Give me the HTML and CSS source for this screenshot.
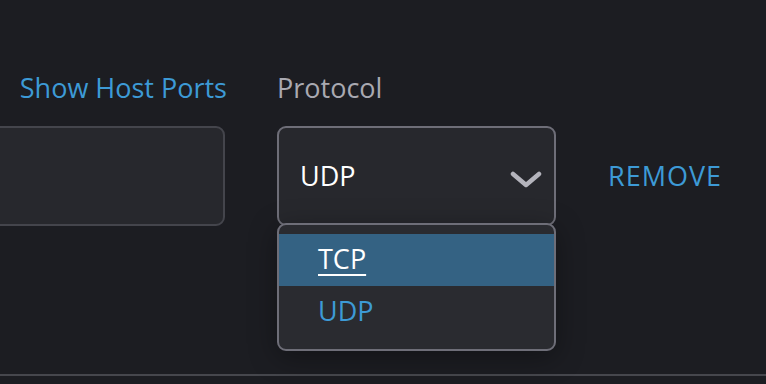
FILE: index.html
```html
<!DOCTYPE html>
<html>
<head>
<meta charset="utf-8">
<link rel="stylesheet" href="styles.css">
</head>
<body>
<div class="page">
  <div class="row">
    <div class="field host">
      <div class="label label-right"><a class="link" href="#">Show Host Ports</a></div>
      <div class="input"></div>
    </div>
    <div class="field proto">
      <div class="label">Protocol</div>
      <div class="select-wrap">
        <div class="select">
          <span class="value">UDP</span>
          <svg class="chevron" width="32" height="18" viewBox="0 0 32 18"><polyline points="3,3 16,14 29,3" fill="none" stroke="#b4b4bc" stroke-width="4.5" stroke-linecap="round" stroke-linejoin="round"/></svg>
        </div>
        <div class="menu">
          <div class="opt active">TCP</div>
          <div class="opt">UDP</div>
        </div>
      </div>
    </div>
    <div class="remove">REMOVE</div>
  </div>
  <div class="divider"></div>
</div>
</body>
</html>
```
FILE: styles.css
```css
html, body {
  margin: 0;
  padding: 0;
  background: #1c1d22;
  width: 766px;
  height: 384px;
  overflow: hidden;
  font-family: "Open Sans", "Noto Sans", sans-serif;
}
.page {
  display: flex;
  flex-direction: column;
  height: 384px;
}
.row {
  display: flex;
  align-items: flex-start;
  padding-top: 68px;
  margin-left: -60px;
  height: 306px;
}
.field {
  display: flex;
  flex-direction: column;
}
.host {
  width: 285px;
  margin-right: 52px;
}
.proto {
  width: 279px;
}
.label {
  height: 44px;
  line-height: 40px;
  font-size: 27px;
  color: #a9a9b1;
  margin-bottom: 14px;
}
.label-right {
  display: flex;
  justify-content: flex-end;
  margin-right: -2px;
}
.link {
  color: #3d9ad6;
  text-decoration: none;
}
.input {
  height: 96px;
  border: 2px solid #44454c;
  border-radius: 9px;
  background: #27282d;
}
.select-wrap {
  position: relative;
}
.select {
  height: 96px;
  border: 2px solid #6e6e78;
  border-radius: 9px;
  background: #27282d;
  display: flex;
  align-items: center;
  justify-content: space-between;
  padding: 0 12px 0 21px;
}
.value {
  color: #ffffff;
  font-size: 27px;
  padding-bottom: 2px;
}
.chevron {
  margin-top: 7px;
}
.menu {
  position: absolute;
  left: 0;
  right: 0;
  top: 97px;
  border: 2px solid #6e6e78;
  border-radius: 9px;
  background: #2a2b30;
  padding: 9px 0 11px;
  box-shadow: 0 6px 28px rgba(0, 0, 0, 0.35);
}
.opt {
  height: 52px;
  line-height: 50px;
  padding-left: 39px;
  font-size: 27px;
  color: #3d9ad6;
}
.opt.active {
  background: #346283;
  color: #ffffff;
  text-decoration: underline;
  text-underline-offset: 5px;
  text-decoration-thickness: 2px;
}
.remove {
  margin-left: 52px;
  margin-top: 89px;
  font-size: 27px;
  letter-spacing: 1px;
  color: #3d9ad6;
}
.divider {
  height: 2px;
  background: #46474d;
  margin-top: auto;
  margin-bottom: 8px;
}
```
